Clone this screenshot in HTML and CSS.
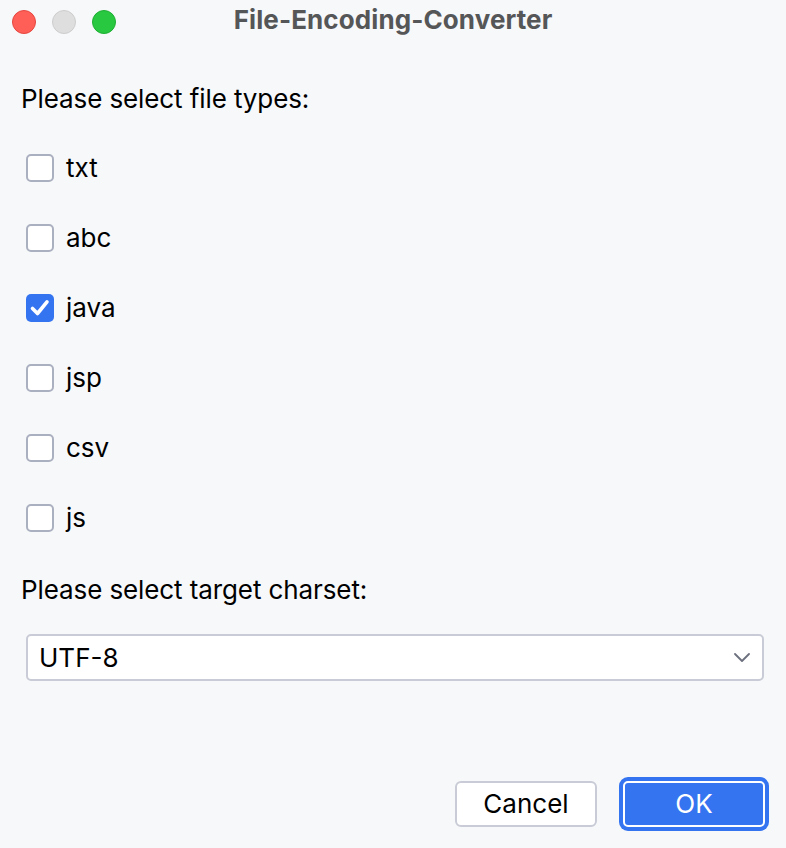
FILE: index.html
```html
<!DOCTYPE html>
<html lang="en">
<head>
<meta charset="utf-8">
<title>File-Encoding-Converter</title>
<link rel="stylesheet" href="styles.css">
</head>
<body>
<div class="window">
  <header class="titlebar">
    <div class="lights">
      <span class="light red"></span>
      <span class="light grey"></span>
      <span class="light green"></span>
    </div>
    <div class="title">File-Encoding-Converter</div>
    <div></div>
  </header>

  <main class="content">
    <div class="label">Please select file types:</div>
    <div class="checks">
      <div class="row"><span class="box"></span><span class="text">txt</span></div>
      <div class="row"><span class="box"></span><span class="text">abc</span></div>
      <div class="row"><span class="box checked"><svg viewBox="0 0 28 28" width="28" height="28"><polyline points="6.5,14.5 11.5,19.5 21,7.8" fill="none" stroke="#fff" stroke-width="3.6" stroke-linecap="round" stroke-linejoin="round"/></svg></span><span class="text">java</span></div>
      <div class="row"><span class="box"></span><span class="text">jsp</span></div>
      <div class="row"><span class="box"></span><span class="text">csv</span></div>
      <div class="row"><span class="box"></span><span class="text">js</span></div>
    </div>
    <div class="label label-charset">Please select target charset:</div>
    <div class="combo">
      <span class="combo-text">UTF-8</span>
      <svg class="chevron" viewBox="0 0 16 9" width="16" height="9"><polyline points="1,1 8,8 15,1" fill="none" stroke="#6c707e" stroke-width="1.8" stroke-linecap="round" stroke-linejoin="round"/></svg>
    </div>
  </main>

  <footer class="footer">
    <button class="btn btn-cancel">Cancel</button>
    <button class="btn btn-ok">OK</button>
  </footer>
</div>
</body>
</html>
```

FILE: styles.css
```css
* { box-sizing: border-box; }

html, body {
  margin: 0;
  padding: 0;
  background: #f7f8fa;
}

body {
  font-family: Inter, "Noto Sans", "Liberation Sans", sans-serif;
  font-size: 26px;
  line-height: 32px;
  color: #000;
}

.window {
  width: 786px;
  height: 848px;
  display: flex;
  flex-direction: column;
}

.titlebar {
  height: 44px;
  display: grid;
  grid-template-columns: 1fr auto 1fr;
  align-items: start;
}

.lights {
  display: flex;
  gap: 16px;
  padding: 10px 0 0 12px;
}

.light {
  width: 24px;
  height: 24px;
  border-radius: 50%;
  display: block;
}

.red { background: #ff5f57; border: 1px solid #e5463f; }
.grey { background: #dedede; border: 1px solid #cdcdcd; }
.green { background: #28c840; border: 1px solid #1eaf34; }

.title {
  margin-top: 4px;
  font-weight: 700;
  color: #555657;
  font-size: 26px;
  letter-spacing: 0.1px;
}

.content {
  padding: 39px 21px 0 21px;
}

.label {
  letter-spacing: -0.1px;
}

.checks {
  margin-top: 37px;
  display: flex;
  flex-direction: column;
  gap: 38px;
  padding-left: 5px;
}

.row {
  display: flex;
  align-items: center;
  height: 32px;
  gap: 12px;
}

.box {
  width: 28px;
  height: 28px;
  border: 2px solid #aab0bf;
  border-radius: 5px;
  background: #fff;
  display: block;
  flex: none;
}

.box.checked {
  border: none;
  background: #3574f0;
}

.box svg { display: block; }

.label-charset {
  margin-top: 40px;
}

.combo {
  margin: 28px 1px 0 5px;
  height: 47px;
  border: 2px solid #c9ccd6;
  border-radius: 5px;
  background: #fff;
  display: flex;
  align-items: center;
  justify-content: space-between;
  padding: 0 12px 0 11px;
}

.chevron { display: block; }

.footer {
  margin-top: auto;
  padding: 0 21px 21px 21px;
  display: flex;
  justify-content: flex-end;
  gap: 26px;
}

.btn {
  width: 142px;
  height: 46px;
  font-family: inherit;
  font-size: 26px;
  line-height: 32px;
  padding: 0;
  border-radius: 6px;
}

.btn-cancel {
  background: #fff;
  border: 2px solid #c9ccd6;
  color: #000;
}

.btn-ok {
  background: #3574f0;
  color: #fff;
  border: 2px solid #fff;
  box-shadow: 0 0 0 4px #3574f0;
  border-radius: 5px;
}
```
